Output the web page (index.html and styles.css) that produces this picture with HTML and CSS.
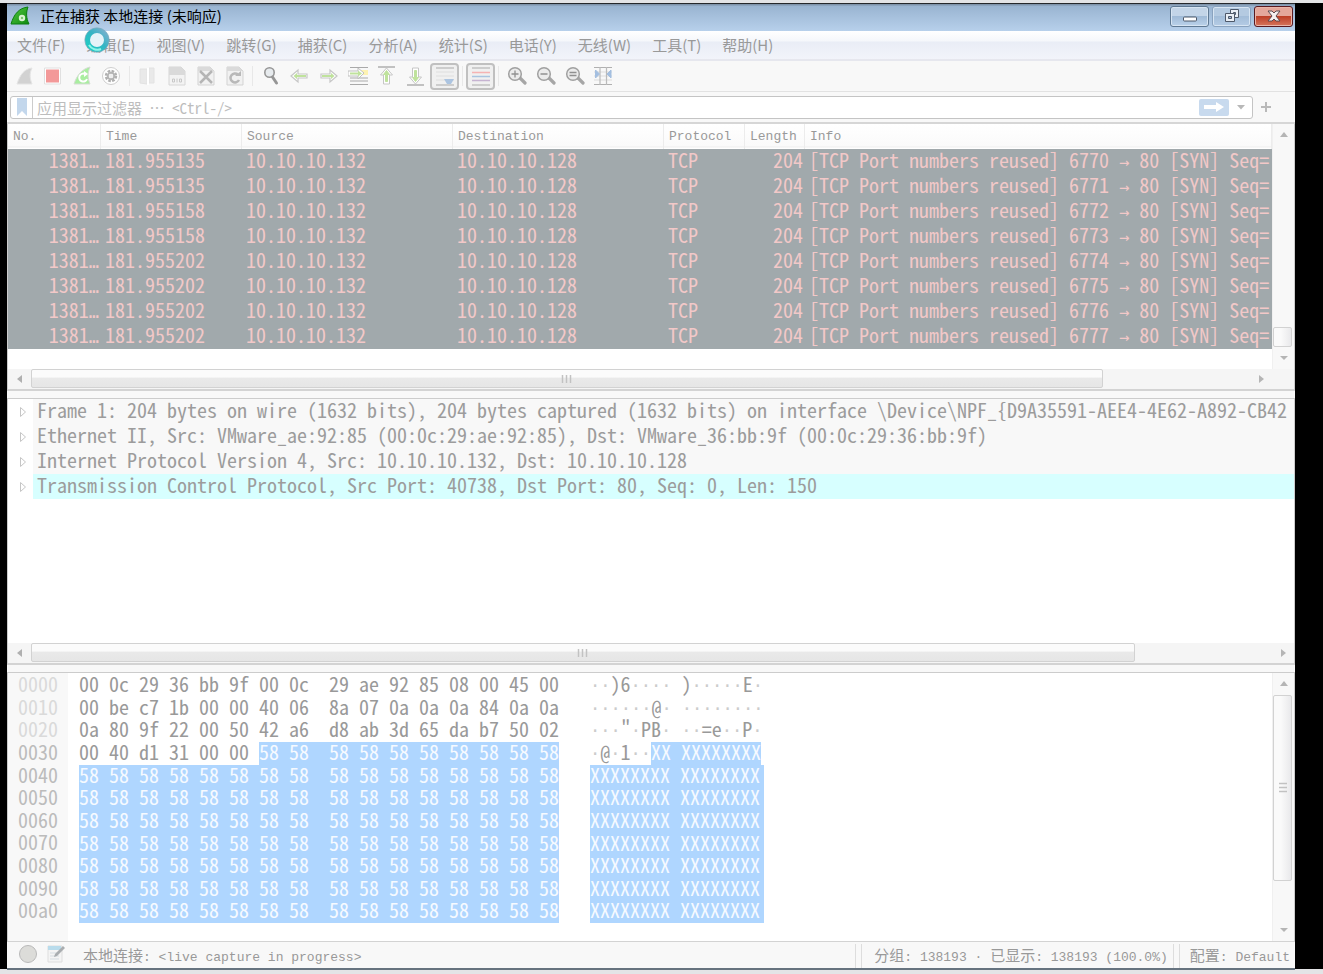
FILE: index.html
```html
<!DOCTYPE html>
<html lang="zh-CN">
<head>
<meta charset="utf-8">
<title>正在捕获 本地连接</title>
<link rel="stylesheet" href="styles.css">
</head>
<body>
<div class="window">
  <header class="titlebar">
    <svg class="app-icon" width="20" height="20" viewBox="0 0 20 20"><defs><linearGradient id="fin" x1="0" y1="0" x2="1" y2="1"><stop offset="0" stop-color="#54c83f"/><stop offset="1" stop-color="#0e8a10"/></linearGradient></defs><path d="M1 18C4 8 9 2 18 1C16 6 16 12 19 18Z" fill="url(#fin)" stroke="#0b7d10"/><circle cx="12" cy="12" r="3.200" fill="#d9f3d2"/><circle cx="12" cy="12" r="1.200" fill="#7cc46e"/></svg>
    <h1 class="title">正在捕获 本地连接 (未响应)</h1>
    <div class="window-buttons">
      <button class="wbtn" aria-label="最小化"><svg width="16" height="14" viewBox="0 0 16 14"><rect x="1.500" y="8" width="13" height="4" rx="1" fill="#fff" stroke="#4d5869"/></svg></button>
      <button class="wbtn wbtn-flat" aria-label="还原"><svg width="16" height="14" viewBox="0 0 16 14"><path d="M6.500 .5h8v8h-8z" fill="#e8eef5" stroke="#4d5869"/><path d="M9.500 3.500h2v2h-2z" fill="#9db6d2" stroke="#4d5869"/><path d="M1.500 4.500h9v8h-9z" fill="#e8eef5" stroke="#4d5869"/><path d="M4.500 7.500h3v2h-3z" fill="#9db6d2" stroke="#4d5869"/></svg></button>
      <button class="wbtn wbtn-close" aria-label="关闭"><svg width="16" height="14" viewBox="0 0 16 14"><path d="M2 2h4l2 2 2-2h4l-4 5 4 5h-4L8 10l-2 2H2l4-5z" fill="#f5f1f1" stroke="#5b4a50"/></svg></button>
    </div>
  </header>

  <nav class="menubar">
    <button class="menu">文件(F)</button><button class="menu">编辑(E)</button><button class="menu">视图(V)</button><button class="menu">跳转(G)</button><button class="menu">捕获(C)</button><button class="menu">分析(A)</button><button class="menu">统计(S)</button><button class="menu">电话(Y)</button><button class="menu">无线(W)</button><button class="menu">工具(T)</button><button class="menu">帮助(H)</button>
    <svg class="busy" width="28" height="28" viewBox="0 0 28 28"><defs><linearGradient id="ring" x1="0" y1="1" x2="1" y2="0"><stop offset="0" stop-color="#19cfc4"/><stop offset=".55" stop-color="#35b4c4"/><stop offset="1" stop-color="#7fb0cf"/></linearGradient></defs><circle cx="14" cy="14" r="9.500" fill="#e6f3f8" stroke="url(#ring)" stroke-width="5"/><circle cx="14" cy="14" r="12.200" fill="none" stroke="#6fa5b8" stroke-width=".7"/><path d="M6 19a9.500 9.500 0 0 0 12 4" fill="none" stroke="#8ff5ea" stroke-width="2"/></svg>
  </nav>

  <div class="toolbar" role="toolbar">
    <button class="tool" aria-label="开始捕获"><svg viewBox="0 0 20 20"><path d="M2 18C5 9 9 3 17 2C14 8 15 13 17 18Z" fill="#d2d2d2" stroke="#e4e4e4"/></svg></button>
    <button class="tool" aria-label="停止捕获"><svg viewBox="0 0 20 20"><path d="M.5 2h16v16H.5z" fill="#fff" stroke="#e0e0e0"/><path d="M2 3.500h13v13H2z" fill="#f39999"/></svg></button>
    <button class="tool" aria-label="重新捕获"><svg viewBox="0 0 20 20"><path d="M1 18C4 9 9 3 17 1C14 8 15 13 17 18Z" fill="#a9eea0" stroke="#d5dcd4"/><path d="M12 8a4 4 0 1 0 2 5" fill="none" stroke="#fff" stroke-width="2"/><path d="M11 5l4 3-4 3z" fill="#fff"/></svg></button>
    <button class="tool" aria-label="捕获选项"><svg viewBox="0 0 20 20"><circle cx="9" cy="10" r="8.500" fill="#fff" stroke="#cfcfcf"/><circle cx="9" cy="10" r="5" fill="none" stroke="#b0b0b0" stroke-width="2.500" stroke-dasharray="2.600 1.320"/><circle cx="9" cy="10" r="3.300" fill="none" stroke="#b5b5b5" stroke-width="2"/><circle cx="9" cy="10" r="2" fill="#eee"/></svg></button>
    <span class="sep"></span>
    <button class="tool" aria-label="打开"><svg viewBox="0 0 20 20"><path d="M2 3h7v15l-7-1zM11 2h5v15h-5z" fill="#e9e9e9" stroke="#e2e2e2"/><path d="M10 2v17" stroke="#fff" stroke-width="2"/></svg></button>
    <button class="tool" aria-label="保存"><svg viewBox="0 0 20 20"><path d="M2 1h12l4 4v14H2z" fill="#f3f3f3" stroke="#d6d6d6"/><path d="M2 1h12l4 4v4H2z" fill="#dadada"/><path d="M5.500 13h2v3h-2zM10 12.500v4M12.500 13h2v3h-2z" fill="none" stroke="#c8c8c8"/></svg></button>
    <button class="tool" aria-label="关闭文件"><svg viewBox="0 0 20 20"><path d="M2 1h12l4 4v14H2z" fill="#f1f1f1" stroke="#d3d3d3"/><path d="M2 1h12l4 4H2z" fill="#dadada"/><path d="M4 5l12 12M16 5L4 17" stroke="#b5b5b5" stroke-width="2.500"/></svg></button>
    <button class="tool" aria-label="重新加载"><svg viewBox="0 0 20 20"><path d="M2 1h12l4 4v14H2z" fill="#f1f1f1" stroke="#d3d3d3"/><path d="M2 1h12l4 4H2z" fill="#dadada"/><path d="M13 8.500A4.500 4.500 0 1 0 14 14" fill="none" stroke="#b8b8b8" stroke-width="2.500"/><path d="M10 10h6V5z" fill="#b8b8b8"/></svg></button>
    <span class="sep"></span>
    <button class="tool" aria-label="查找"><svg viewBox="0 0 20 20"><circle cx="8.500" cy="6.500" r="4.700" fill="#e7ebee" stroke="#969696" stroke-width="1.600"/><path d="M11.500 11l4 6" stroke="#969696" stroke-width="3" stroke-linecap="round"/></svg></button>
    <button class="tool" aria-label="后退"><svg viewBox="0 0 20 20"><path d="M1 10l7-6v4h9v4H8v4z" fill="#fff" stroke="#c6c6c6" stroke-width="1.200"/><path d="M3.500 10l3.500-3v2h9v2H7v2z" fill="#bfe29c"/></svg></button>
    <button class="tool" aria-label="前进"><svg viewBox="0 0 20 20"><path d="M18 10l-7-6v4H2v4h9v4z" fill="#fff" stroke="#c6c6c6" stroke-width="1.200"/><path d="M15.500 10L12 7v2H3v2h9v2z" fill="#bfe29c"/></svg></button>
    <button class="tool" aria-label="转到分组"><svg viewBox="0 0 20 20"><path d="M2 1.500h18M2 12h18M2 15h18M2 18.500h18" stroke="#a9a9a9" stroke-width="1.200"/><path d="M13 4h7v5h-7z" fill="#fdf2b2"/><path d="M16 7l-6-5v3H0v5h10v3z" fill="#fff" stroke="#c0c0c0"/><path d="M14 7.500l-4-3v2H2v2h8v2z" fill="#bfe29c"/></svg></button>
    <button class="tool" aria-label="首个分组"><svg viewBox="0 0 20 20"><path d="M1 1h17" stroke="#aaa" stroke-width="1.400"/><path d="M9.500 2l6 7h-3v9h-6V9h-3z" fill="#fff" stroke="#c6c6c6"/><path d="M9.500 4.500l3 4h-2v7h-2v-7h-2z" fill="#bfe29c" stroke="#bfe29c"/></svg></button>
    <button class="tool" aria-label="最新分组"><svg viewBox="0 0 20 20"><path d="M1 19h17" stroke="#aaa" stroke-width="1.400"/><path d="M9.500 18l6-7h-3V2h-6v9h-3z" fill="#fff" stroke="#c6c6c6"/><path d="M9.500 15.500l3-4h-2v-7h-2v7h-2z" fill="#bfe29c" stroke="#bfe29c"/></svg></button>
    <button class="tool tool-on" aria-label="自动滚动" aria-pressed="true"><svg viewBox="0 0 20 20"><path d="M1 2h18M1 19h18" stroke="#aaa" stroke-width="1.200"/><path d="M1 6h18M1 10h18M1 14h18" stroke="#dedede" stroke-width="1.200"/><path d="M9 13h10l-3 5h-4z" fill="#acc4e0"/></svg></button>
    <span class="sep"></span>
    <button class="tool tool-on" aria-label="着色" aria-pressed="true"><svg viewBox="0 0 20 20"><path d="M1 2h18M1 19h18" stroke="#aaa" stroke-width="1.200"/><path d="M1 6.500h18" stroke="#f5b3b3" stroke-width="1.500"/><path d="M1 10.500h18" stroke="#a9c4e0" stroke-width="1.500"/><path d="M1 14.500h18" stroke="#c6b3d1" stroke-width="1.500"/></svg></button>
    <span class="sep"></span>
    <button class="tool" aria-label="放大"><svg viewBox="0 0 20 20"><path d="M13 12l5 5" stroke="#a6a6a6" stroke-width="3.200" stroke-linecap="round"/><circle cx="8" cy="8" r="6.300" fill="#ebebeb" stroke="#a0a0a0" stroke-width="1.500"/><path d="M4.500 8h7M8 4.500v7" stroke="#909090" stroke-width="1.300"/></svg></button>
    <button class="tool" aria-label="缩小"><svg viewBox="0 0 20 20"><path d="M13 12l5 5" stroke="#a6a6a6" stroke-width="3.200" stroke-linecap="round"/><circle cx="8" cy="8" r="6.300" fill="#ebebeb" stroke="#a0a0a0" stroke-width="1.500"/><path d="M4.500 8h7" stroke="#909090" stroke-width="1.500"/></svg></button>
    <button class="tool" aria-label="正常大小"><svg viewBox="0 0 20 20"><path d="M13 12l5 5" stroke="#a6a6a6" stroke-width="3.200" stroke-linecap="round"/><circle cx="8" cy="8" r="6.300" fill="#ebebeb" stroke="#a0a0a0" stroke-width="1.500"/><path d="M4.500 6.500h7M4.500 9.500h7" stroke="#909090" stroke-width="1.300"/></svg></button>
    <button class="tool" aria-label="调整列宽"><svg viewBox="0 0 20 20"><path d="M0 1.500h18M0 18.500h18" stroke="#b0b0b0" stroke-width="1.200"/><path d="M0 6h18M0 10h18M0 14h18" stroke="#dcdcdc"/><path d="M6 1v18M12.500 1v18" stroke="#bbb" stroke-width="1.200"/><path d="M1.500 4l4 4-4 4zM17 4l-4 4 4 4z" fill="#a4bfe0" stroke="#a4bfe0"/></svg></button>
  </div>

  <div class="filterbar">
    <div class="filter">
      <button class="bookmark" aria-label="书签"><svg width="12" height="18" viewBox="0 0 12 18"><path d="M1 0h10v18l-5-5-5 5z" fill="#c3d7ec"/></svg></button>
      <input class="filter-input" type="text" aria-label="显示过滤器" placeholder="应用显示过滤器 ⋯ &lt;Ctrl-/&gt;">
      <button class="apply" aria-label="应用"><svg width="22" height="12" viewBox="0 0 22 12"><path d="M1 4h12V1l8 5-8 5V8H1z" fill="#fff"/></svg></button>
      <button class="drop" aria-label="历史"><svg width="10" height="6" viewBox="0 0 10 6"><path d="M1 1h8L5 5.500z" fill="#b8b8b8"/></svg></button>
    </div>
    <button class="add" aria-label="添加"><svg width="12" height="12" viewBox="0 0 12 12"><path d="M6 1v10M1 6h10" stroke="#b9b9b9" stroke-width="2"/></svg></button>
  </div>

  <main class="panes">
    <section class="pane packets">
      <div class="pane-row">
        <div class="packet-view">
          <table class="packet-table">
            <colgroup><col class="c-no"><col class="c-time"><col class="c-addr"><col class="c-addr"><col class="c-proto"><col class="c-len"><col></colgroup>
            <thead><tr><th>No.</th><th>Time</th><th>Source</th><th>Destination</th><th>Protocol</th><th>Length</th><th>Info</th></tr></thead>
            <tbody>
              <tr><td class="num">1381<i>…</i></td><td>181.955135</td><td>10.10.10.132</td><td>10.10.10.128</td><td>TCP</td><td class="num">204</td><td>[TCP Port numbers reused] 6770 <i>→</i> 80 [SYN] Seq=</td></tr>
              <tr><td class="num">1381<i>…</i></td><td>181.955135</td><td>10.10.10.132</td><td>10.10.10.128</td><td>TCP</td><td class="num">204</td><td>[TCP Port numbers reused] 6771 <i>→</i> 80 [SYN] Seq=</td></tr>
              <tr><td class="num">1381<i>…</i></td><td>181.955158</td><td>10.10.10.132</td><td>10.10.10.128</td><td>TCP</td><td class="num">204</td><td>[TCP Port numbers reused] 6772 <i>→</i> 80 [SYN] Seq=</td></tr>
              <tr><td class="num">1381<i>…</i></td><td>181.955158</td><td>10.10.10.132</td><td>10.10.10.128</td><td>TCP</td><td class="num">204</td><td>[TCP Port numbers reused] 6773 <i>→</i> 80 [SYN] Seq=</td></tr>
              <tr><td class="num">1381<i>…</i></td><td>181.955202</td><td>10.10.10.132</td><td>10.10.10.128</td><td>TCP</td><td class="num">204</td><td>[TCP Port numbers reused] 6774 <i>→</i> 80 [SYN] Seq=</td></tr>
              <tr><td class="num">1381<i>…</i></td><td>181.955202</td><td>10.10.10.132</td><td>10.10.10.128</td><td>TCP</td><td class="num">204</td><td>[TCP Port numbers reused] 6775 <i>→</i> 80 [SYN] Seq=</td></tr>
              <tr><td class="num">1381<i>…</i></td><td>181.955202</td><td>10.10.10.132</td><td>10.10.10.128</td><td>TCP</td><td class="num">204</td><td>[TCP Port numbers reused] 6776 <i>→</i> 80 [SYN] Seq=</td></tr>
              <tr><td class="num">1381<i>…</i></td><td>181.955202</td><td>10.10.10.132</td><td>10.10.10.128</td><td>TCP</td><td class="num">204</td><td>[TCP Port numbers reused] 6777 <i>→</i> 80 [SYN] Seq=</td></tr>
            </tbody>
          </table>
        </div>
        <div class="vscroll vscroll-end">
          <button class="arrow" aria-label="向上"><svg width="10" height="6" viewBox="0 0 10 6"><path d="M5 0l4 5H1z" fill="#b5b5b5"/></svg></button>
          <div class="vtrack"><div class="vthumb vthumb-small"></div></div>
          <button class="arrow" aria-label="向下"><svg width="10" height="6" viewBox="0 0 10 6"><path d="M1 1h8L5 5z" fill="#b5b5b5"/></svg></button>
        </div>
      </div>
      <div class="hscroll hscroll-corner">
        <button class="arrow" aria-label="向左"><svg width="6" height="10" viewBox="0 0 6 10"><path d="M5 1v8L0 5z" fill="#b0b0b0"/></svg></button>
        <div class="htrack"><div class="hthumb hthumb-a"><svg width="11" height="8" viewBox="0 0 11 8"><path d="M1.500 0v8M5.500 0v8M9.500 0v8" stroke="#c2c2c2" stroke-width="1.500"/></svg></div></div>
        <button class="arrow" aria-label="向右"><svg width="6" height="10" viewBox="0 0 6 10"><path d="M1 1v8l5-4z" fill="#b5b5b5"/></svg></button>
      </div>
    </section>

    <section class="pane details">
      <ul class="tree">
        <li><button class="twist" aria-label="展开"><svg width="8" height="12" viewBox="0 0 8 12"><path d="M1.500 1.500L6.500 6l-5 4.500z" fill="#fff" stroke="#c6c6c6"/></svg></button><span class="node">Frame 1: 204 bytes on wire (1632 bits), 204 bytes captured (1632 bits) on interface \Device\NPF_{D9A35591-AEE4-4E62-A892-CB42</span></li>
        <li><button class="twist" aria-label="展开"><svg width="8" height="12" viewBox="0 0 8 12"><path d="M1.500 1.500L6.500 6l-5 4.500z" fill="#fff" stroke="#c6c6c6"/></svg></button><span class="node">Ethernet II, Src: VMware_ae:92:85 (00:0c:29:ae:92:85), Dst: VMware_36:bb:9f (00:0c:29:36:bb:9f)</span></li>
        <li><button class="twist" aria-label="展开"><svg width="8" height="12" viewBox="0 0 8 12"><path d="M1.500 1.500L6.500 6l-5 4.500z" fill="#fff" stroke="#c6c6c6"/></svg></button><span class="node">Internet Protocol Version 4, Src: 10.10.10.132, Dst: 10.10.10.128</span></li>
        <li><button class="twist" aria-label="展开"><svg width="8" height="12" viewBox="0 0 8 12"><path d="M1.500 1.500L6.500 6l-5 4.500z" fill="#fff" stroke="#c6c6c6"/></svg></button><span class="node node-selected">Transmission Control Protocol, Src Port: 40738, Dst Port: 80, Seq: 0, Len: 150</span></li>
      </ul>
      <div class="hscroll">
        <button class="arrow" aria-label="向左"><svg width="6" height="10" viewBox="0 0 6 10"><path d="M5 1v8L0 5z" fill="#b0b0b0"/></svg></button>
        <div class="htrack"><div class="hthumb hthumb-b"><svg width="11" height="8" viewBox="0 0 11 8"><path d="M1.500 0v8M5.500 0v8M9.500 0v8" stroke="#c2c2c2" stroke-width="1.500"/></svg></div></div>
        <button class="arrow" aria-label="向右"><svg width="6" height="10" viewBox="0 0 6 10"><path d="M1 1v8l5-4z" fill="#b5b5b5"/></svg></button>
      </div>
    </section>

    <section class="pane bytes">
      <div class="pane-row">
        <div class="dump">
          <div class="col offsets"><span class="dim">0000</span><span class="dim">0010</span><span class="dim">0020</span><span>0030</span><span>0040</span><span>0050</span><span>0060</span><span>0070</span><span>0080</span><span>0090</span><span>00a0</span></div>
          <div class="col hex">
            <span>00 0c 29 36 bb 9f 00 0c  29 ae 92 85 08 00 45 00</span>
            <span>00 be c7 1b 00 00 40 06  8a 07 0a 0a 0a 84 0a 0a</span>
            <span>0a 80 9f 22 00 50 42 a6  d8 ab 3d 65 da b7 50 02</span>
            <span class="part">00 40 d1 31 00 00 <mark>58 58  58 58 58 58 58 58 58 58</mark></span>
            <mark>58 58 58 58 58 58 58 58  58 58 58 58 58 58 58 58</mark>
            <mark>58 58 58 58 58 58 58 58  58 58 58 58 58 58 58 58</mark>
            <mark>58 58 58 58 58 58 58 58  58 58 58 58 58 58 58 58</mark>
            <mark>58 58 58 58 58 58 58 58  58 58 58 58 58 58 58 58</mark>
            <mark>58 58 58 58 58 58 58 58  58 58 58 58 58 58 58 58</mark>
            <mark>58 58 58 58 58 58 58 58  58 58 58 58 58 58 58 58</mark>
            <mark>58 58 58 58 58 58 58 58  58 58 58 58 58 58 58 58</mark>
          </div>
          <div class="col ascii">
            <span><i>··</i>)6<i>····</i> )<i>·····</i>E<i>·</i></span>
            <span><i>······</i>@<i>·</i> <i>········</i></span>
            <span><i>···</i>"<i>·</i>PB<i>·</i> <i>··</i>=e<i>··</i>P<i>·</i></span>
            <span class="part"><i>·</i>@<i>·</i>1<i>··</i><mark>XX XXXXXXXX</mark></span>
            <mark>XXXXXXXX XXXXXXXX</mark>
            <mark>XXXXXXXX XXXXXXXX</mark>
            <mark>XXXXXXXX XXXXXXXX</mark>
            <mark>XXXXXXXX XXXXXXXX</mark>
            <mark>XXXXXXXX XXXXXXXX</mark>
            <mark>XXXXXXXX XXXXXXXX</mark>
            <mark>XXXXXXXX XXXXXXXX</mark>
          </div>
        </div>
        <div class="vscroll">
          <button class="arrow" aria-label="向上"><svg width="10" height="6" viewBox="0 0 10 6"><path d="M5 0l4 5H1z" fill="#b5b5b5"/></svg></button>
          <div class="vtrack"><div class="vthumb vthumb-large"><svg width="8" height="11" viewBox="0 0 8 11"><path d="M0 1.500h8M0 5.500h8M0 9.500h8" stroke="#c2c2c2" stroke-width="1.500"/></svg></div></div>
          <button class="arrow" aria-label="向下"><svg width="10" height="6" viewBox="0 0 10 6"><path d="M1 1h8L5 5z" fill="#b5b5b5"/></svg></button>
        </div>
      </div>
    </section>
  </main>

  <footer class="statusbar">
    <button class="status-btn" aria-label="专家信息"><svg width="20" height="20" viewBox="0 0 20 20"><circle cx="11" cy="10" r="8.500" fill="#dcdcd9" stroke="#b9b9b9"/></svg></button>
    <button class="status-btn" aria-label="捕获注释"><svg width="20" height="20" viewBox="0 0 20 20"><path d="M2 2h14v16H2z" fill="#f4f4f4" stroke="#dedede"/><path d="M2 2h13v4H2z" fill="#b9dcec"/><path d="M4 9h9M4 12h9M4 15h9" stroke="#d5dde2"/><path d="M8 13l1-3 8-8 2 2-8 8z" fill="#a9adb0"/></svg></button>
    <span class="status-text">本地连接<span class="latin">: &lt;live capture in progress&gt;</span></span>
    <span class="status-cell">分组<span class="latin">: 138193 · </span>已显示<span class="latin">: 138193 (100.0%)</span></span>
    <span class="status-cell profile">配置<span class="latin">: Default</span></span>
  </footer>
</div>
</body>
</html>
```
FILE: styles.css
```css
* { box-sizing: border-box; }

html, body { height: 100%; }

body {
  margin: 0;
  padding: 3px 28px 4px 7px;
  background: linear-gradient(#e3e4e6 3px, #000 3px, #000 calc(100% - 5px), #e3e4e6 calc(100% - 5px));
  font-family: "Noto Sans CJK SC", sans-serif;
  font-size: 15px;
  color: #999;
}

button {
  display: flex;
  align-items: center;
  justify-content: center;
  margin: 0;
  padding: 0;
  border: 0;
  background: none;
  font: inherit;
  color: inherit;
}

svg { display: block; flex: none; }

i {
  font-family: "DejaVu Sans Mono", monospace;
  font-size: 17px;
  font-style: normal;
  line-height: 0;
}

.window {
  display: flex;
  flex-direction: column;
  height: 100%;
  background: #f8f8f8;
  border-top: 1px solid #25282c;
  border-bottom: 2px solid #66737f;
}

.titlebar {
  display: flex;
  align-items: center;
  height: 27px;
  padding: 0 2px 3px 3px;
  background: linear-gradient(#7e93aa 1px, #99b4d1 2px, #b7d0eb);
}

.title {
  flex: 1;
  margin: 0 0 0 10px;
  font-size: 15px;
  font-weight: 400;
  line-height: 22px;
  color: #000;
}

.window-buttons { display: flex; gap: 3px; }

.wbtn {
  width: 39px;
  height: 21px;
  border: 1px solid #5f7993;
  border-radius: 3px;
  background: linear-gradient(#c3d5e8 50%, #a0bbd7 50%, #bbd2ea);
  box-shadow: inset 0 0 0 1px #d7e5f3;
}

.wbtn-flat { border-color: #8aa3bf; background: linear-gradient(#b4cae1 50%, #a3bdd9 50%, #b5cce5); }

.wbtn-close {
  border-color: #5a1a20;
  background: linear-gradient(#e4a79b 50%, #bd3f27 50%, #d5755c);
  box-shadow: inset 0 0 0 1px #e9b5a9;
}

.menubar {
  position: relative;
  display: flex;
  gap: 1px;
  height: 30px;
  border-bottom: 2px solid #e6e7ee;
  background: linear-gradient(#fff, #f5f7fb 35%, #e9edf6 40%, #f2f4fa);
}

.menu { padding: 0 10px; line-height: 28px; white-space: nowrap; }

.busy { position: absolute; left: 76px; top: -5px; }

.toolbar {
  display: flex;
  align-items: center;
  height: 31px;
  padding: 0 3px;
  border-bottom: 1px solid #e2e2e2;
}

.tool { width: 29px; height: 27px; }
.tool svg { width: 20px; height: 20px; }

.tool-on {
  border: 2px solid #c0c0c0;
  border-radius: 4px;
  background: #f0f0f0;
}

.sep { width: 7px; height: 20px; background: linear-gradient(90deg, transparent 3px, #e8e8e8 3px, #e8e8e8 4px, transparent 4px); }

.filterbar {
  display: flex;
  align-items: center;
  height: 32px;
  padding: 0 18px 0 3px;
  border-bottom: 2px solid #d6d6d6;
}

.filter {
  display: flex;
  flex: 1;
  align-items: center;
  height: 23px;
  border: 1px solid #c4c4c4;
  border-radius: 3px;
  background: #fff;
}

.bookmark { width: 22px; height: 100%; border-right: 1px solid #ccc; }

.filter-input {
  flex: 1;
  min-width: 0;
  height: 21px;
  padding: 0 4px;
  border: 0;
  outline: 0;
  background: none;
  font-family: "Noto Sans Mono CJK SC", "Noto Sans CJK SC", monospace;
  font-size: 15px;
}

.filter-input::placeholder { color: #bdbdbd; opacity: 1; }

.apply { width: 30px; height: 17px; border-radius: 2px; background: #c8daee; }
.drop { width: 23px; height: 17px; }
.add { width: 22px; height: 22px; margin-left: 2px; }

.panes {
  display: grid;
  flex: 1;
  grid-template-rows: 267fr 267fr 270fr;
  gap: 7px;
  min-height: 0;
}

.pane {
  display: flex;
  flex-direction: column;
  min-width: 0;
  min-height: 0;
  border: 1px solid #ccc;
  border-bottom-color: #d3d3d3;
  background: #fff;
  overflow: hidden;
}

.packets { border-top: 0; border-bottom-width: 2px; }
.details { border-bottom-width: 2px; }

.pane-row { display: flex; flex: 1; min-height: 0; }

.packet-view { flex: 1; min-width: 0; overflow: hidden; }

.packet-table {
  width: 100%;
  table-layout: fixed;
  border-collapse: collapse;
  background: #a1a9ac;
}

.c-no { width: 93px; }
.c-time { width: 141px; }
.c-addr { width: 211px; }
.c-proto { width: 81px; }
.c-len { width: 60px; }

.packet-table th {
  height: 25px;
  padding: 0 5px;
  background: linear-gradient(90deg, transparent calc(100% - 1px), #ececec calc(100% - 1px)), linear-gradient(#fff, #fafafa 22px, #eee 23px, #fff 24px);
  font-family: "Liberation Mono", monospace;
  font-size: 13px;
  font-weight: 400;
  text-align: left;
}

.packet-table td {
  height: 25px;
  padding: 0 0 4px 4px;
  color: #f2c8c8;
  font-family: "Noto Sans Mono CJK SC", "Liberation Mono", monospace;
  font-size: 20px;
  line-height: 21px;
  white-space: nowrap;
}

.packet-table .num { padding: 0 2px 4px 0; text-align: right; }

.vscroll {
  display: flex;
  flex-direction: column;
  width: 22px;
  border-left: 1px solid #f0f0f0;
  background: #f8f8f8;
}

.vscroll .arrow { height: 22px; }
.vtrack { display: flex; flex: 1; flex-direction: column; min-height: 0; padding-right: 2px; }
.vscroll-end .vtrack { justify-content: flex-end; }

.vthumb {
  display: flex;
  align-items: center;
  justify-content: center;
  border: 1px solid #d2d2d2;
  border-radius: 2px;
  background: linear-gradient(90deg, #fafafa 40%, #e9e9eb);
}

.vthumb-small { height: 20px; }
.vthumb-large { height: 83%; }

.hscroll { display: flex; height: 20px; padding-bottom: 1px; background: #f5f5f5; }
.hscroll-corner { padding-right: 22px; }
.hscroll .arrow { width: 23px; }
.htrack { display: flex; flex: 1; }

.hthumb {
  display: flex;
  align-items: center;
  justify-content: center;
  border: 1px solid #d2d2d2;
  border-radius: 2px;
  background: linear-gradient(#fbfbfb 40%, #e9e9e9 50%, #e6e6e6);
}

.hthumb-a { width: 88%; }
.hthumb-b { width: 89%; }

.tree { flex: 1; margin: 0; padding: 0; list-style: none; }
.tree li { display: flex; }
.twist { flex: none; width: 25px; padding-left: 4px; }

.node {
  flex: 1;
  min-width: 0;
  padding: 0 0 4px 4px;
  background: #f8f8f8;
  color: #9c9c9c;
  font-family: "Noto Sans Mono CJK SC", "Liberation Mono", monospace;
  font-size: 20px;
  line-height: 21px;
  white-space: nowrap;
}

.node-selected { background: #d7ffff; }

.dump {
  display: flex;
  flex: 1;
  min-width: 0;
  font-family: "Noto Sans Mono CJK SC", "Liberation Mono", monospace;
  font-size: 20px;
  line-height: 19px;
  white-space: pre;
}

.col {
  display: grid;
  grid-template-rows: repeat(11, 1fr);
  padding: 1px 0 18px;
}

.col > * { display: block; }
.offsets { padding-left: 10px; padding-right: 10px; background: #f8f8f8; color: #bcbcbc; }
.offsets .dim { color: #dadada; }
.hex { margin-left: 11px; }
.ascii { margin-left: 31px; }
.ascii i { color: #ccc; }

mark { background: #afd6ff; color: #f6faff; }
.part mark { display: inline-block; padding-bottom: 4px; vertical-align: top; }

.statusbar {
  display: flex;
  align-items: center;
  height: 26px;
  padding: 3px 5px 1px 10px;
  line-height: 22px;
  white-space: pre;
}

.status-btn { width: 20px; height: 20px; margin-right: 9px; margin-top: -4px; }
.latin { font-family: "Liberation Mono", monospace; font-size: 13px; line-height: 20px; }
.status-text { flex: 1; padding-left: 8px; }

.status-cell { padding-left: 12px; border-left: 1px solid #ddd; box-shadow: -5px 0 0 #f8f8f8, -6px 0 0 #ddd; }
.profile { margin-left: 11px; padding-left: 10px; }
```
